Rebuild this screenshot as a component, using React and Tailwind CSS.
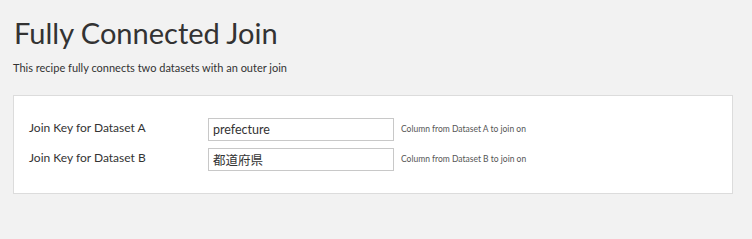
import React from "react";

const rows = [
  { label: "Join Key for Dataset A", value: "prefecture", help: "Column from Dataset A to join on" },
  { label: "Join Key for Dataset B", value: "都道府県", help: "Column from Dataset B to join on" },
];

export default function App() {
  return (
    <div
      className="w-[752px] h-[239px] bg-[#f2f2f2] text-[#333] overflow-hidden"
      style={{ fontFamily: "Lato, 'Noto Sans CJK JP', sans-serif" }}
    >
      <div className="pl-[13px] pr-[19px] pt-[14px]">
        {/* Header */}
        <h1 className="text-[29px] leading-[38px] pl-[1px] font-normal">Fully Connected Join</h1>
        <p className="text-[11px] leading-[16px] mt-[8px]">
          This recipe fully connects two datasets with an outer join
        </p>

        {/* Settings panel */}
        <div className="mt-[19px] bg-white border border-[#dcdcdc] h-[99px] pt-[22px] pl-[15px] flex flex-col gap-[7px]">
          {rows.map((row) => (
            <div key={row.label} className="flex items-center">
              <label className="w-[179px] text-[12px] text-[#333] -mt-[4px]">{row.label}</label>
              <input
                type="text"
                defaultValue={row.value}
                className="w-[186px] h-[23px] border border-[#c8c8c8] px-[4px] text-[12.5px] text-[#333] bg-white outline-none"
                style={{ fontFamily: "Lato, 'Noto Sans CJK JP', sans-serif" }}
              />
              <span className="ml-[7px] text-[8.5px] text-[#555]">{row.help}</span>
            </div>
          ))}
        </div>
      </div>
    </div>
  );
}
